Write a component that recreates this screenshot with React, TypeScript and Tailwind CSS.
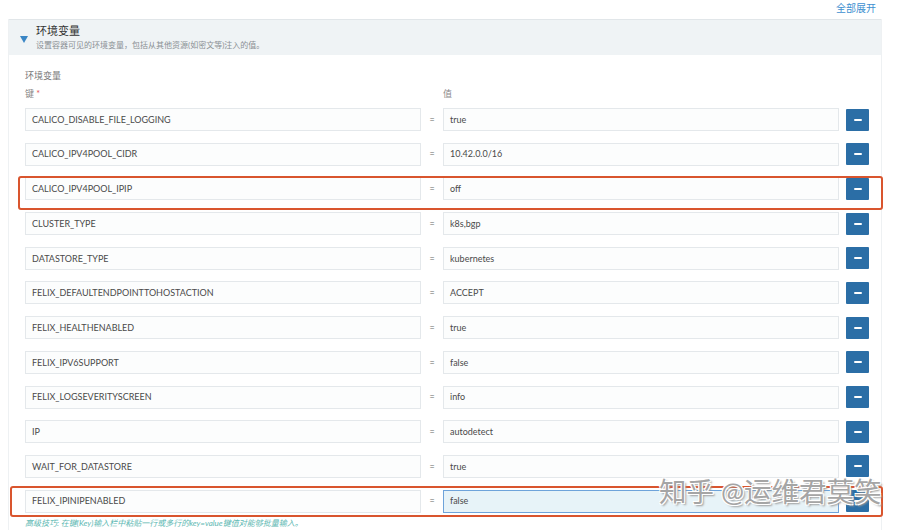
import React from "react";

const rows: { k: string; v: string }[] = [
  { k: "CALICO_DISABLE_FILE_LOGGING", v: "true" },
  { k: "CALICO_IPV4POOL_CIDR", v: "10.42.0.0/16" },
  { k: "CALICO_IPV4POOL_IPIP", v: "off" },
  { k: "CLUSTER_TYPE", v: "k8s,bgp" },
  { k: "DATASTORE_TYPE", v: "kubernetes" },
  { k: "FELIX_DEFAULTENDPOINTTOHOSTACTION", v: "ACCEPT" },
  { k: "FELIX_HEALTHENABLED", v: "true" },
  { k: "FELIX_IPV6SUPPORT", v: "false" },
  { k: "FELIX_LOGSEVERITYSCREEN", v: "info" },
  { k: "IP", v: "autodetect" },
  { k: "WAIT_FOR_DATASTORE", v: "true" },
  { k: "FELIX_IPINIPENABLED", v: "false" },
];

const font = "font-['Lato','Noto_Sans_CJK_SC',sans-serif]";

const App: React.FC = () => {
  return (
    <div className={`relative w-[904px] h-[530px] overflow-hidden bg-white ${font}`}>
      {/* 全部展开 */}
      <div className="h-[19px] pr-[28px] flex items-start justify-end pt-[2px]">
        <span className="text-[10px] leading-[12px] text-[#3d8fd0]">全部展开</span>
      </div>

      <div className="ml-[8px] w-[874px] border-x border-[#eef1f3]">
        {/* header */}
        <div className="h-[36px] bg-[#eff3f5] border-t border-[#e1e6e9] flex items-center pl-[11px]">
          <svg width="8" height="7" viewBox="0 0 8 7" className="mt-[4px]">
            <path d="M0 0 L8 0 L4 7 Z" fill="#3a86c5" />
          </svg>
          <div className="ml-[8px] flex flex-col -mt-[1px]">
            <span className="text-[11px] leading-[14px] text-[#333]">环境变量</span>
            <span className="text-[8px] leading-[12px] text-[#8a8f94] mt-[1px]">
              设置容器可见的环境变量，包括从其他资源(如密文等)注入的值。
            </span>
          </div>
        </div>

        {/* body */}
        <div className="pl-[16px] pr-[12px] pt-[15px] pb-[4px]">
          <div className="text-[9px] leading-[12px] text-[#777]">环境变量</div>
          <div className="flex mt-[6px] text-[9px] leading-[12px] text-[#888]">
            <div className="flex-1">
              键 <span className="text-[#e0505a]">*</span>
            </div>
            <div className="w-[22px]" />
            <div className="flex-1">值</div>
            <div className="w-[30px]" />
          </div>

          <div className="mt-[8px] flex flex-col gap-[11.7px]">
            {rows.map((r, i) => {
              const focused = i === rows.length - 1;
              return (
                <div key={i} className="flex items-center h-[23px]">
                  <div className="flex-1 h-[23px] border border-[#e4e8eb] bg-[#fcfdfd] flex items-center pl-[6px] text-[9px] text-[#4a4a4a]">
                    {r.k}
                  </div>
                  <div className="w-[22px] text-center text-[9px] text-[#666]">=</div>
                  <div
                    className={
                      focused
                        ? "flex-1 h-[23px] border border-[#6ea3da] bg-[#e7f3f8] flex items-center pl-[6px] text-[9px] text-[#4a4a4a]"
                        : "flex-1 h-[23px] border border-[#e4e8eb] bg-[#fcfdfd] flex items-center pl-[6px] text-[9px] text-[#4a4a4a]"
                    }
                  >
                    {r.v}
                  </div>
                  <button className="ml-[7px] w-[23px] h-[22px] bg-[#2b6ea6] rounded-[1px] flex items-center justify-center">
                    <span className="block w-[8px] h-[2px] bg-white rounded-[1px]" />
                  </button>
                </div>
              );
            })}
          </div>

          <div className="mt-[4px] text-[8px] leading-[12px] italic text-[#5cb8b2]">
            高级技巧: 在键(Key)输入栏中粘贴一行或多行的key=value键值对能够批量输入。
          </div>
        </div>
      </div>

      {/* annotation boxes */}
      <div className="absolute left-[18px] top-[176px] w-[865px] h-[34px] border-2 border-[#d9552e] rounded-[3px] pointer-events-none" />
      <div className="absolute left-[10px] top-[486px] w-[873px] h-[31px] border-2 border-[#d9552e] rounded-[3px] pointer-events-none" />

      {/* watermark */}
      <div className="absolute left-[659px] top-[474px] text-[27.5px] leading-[36px] text-[#a5a5a5] [text-shadow:1px_1px_0_#fff,-1px_-1px_0_#fff,1px_-1px_0_#fff,-1px_1px_0_#fff,2px_2px_2px_#999] pointer-events-none whitespace-nowrap">
        知乎 @运维君莫笑
      </div>
    </div>
  );
};

export default App;
